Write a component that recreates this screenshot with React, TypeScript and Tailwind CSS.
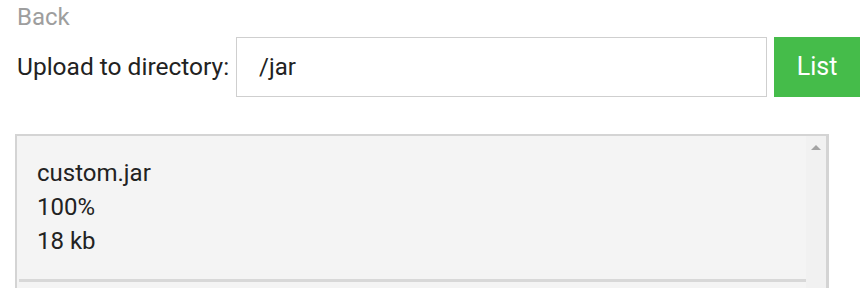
import React from "react";

const font = { fontFamily: "Roboto, 'Noto Sans', sans-serif" };

function UploadItem({ name, progress, size }: { name: string; progress: string; size: string }) {
  return (
    <div className="ml-[2px] border-b-[3px] border-[#d8d8d8] pl-[18px] pt-[20px] pb-[21px] leading-[34px] text-[24px] text-[#222]">
      <div>{name}</div>
      <div>{progress}</div>
      <div>{size}</div>
    </div>
  );
}

export default function App() {
  return (
    <div className="h-[288px] w-[865px] overflow-hidden bg-white pl-[17px]" style={font}>
      <div className="h-[34px] text-[24px] leading-[34px] text-[#9e9e9e]">Back</div>

      <div className="mt-[3px] flex items-center">
        <span className="text-[24.5px] leading-[34px] text-[#222]">Upload to directory:</span>
        <input
          className="ml-[7px] h-[60px] w-[531px] border border-[#cfcfcf] bg-white pl-[22px] text-[24px] text-[#222] outline-none"
          style={font}
          defaultValue="/jar"
        />
        <button className="ml-[7px] h-[60px] w-[86px] bg-[#45bc4a] text-[25px] text-white" style={font}>
          List
        </button>
      </div>

      <div className="-ml-[2px] mt-[37px] flex h-[200px] w-[814px] border-2 border-r-[3px] border-[#d4d4d4] bg-[#f4f4f4]">
        <div className="flex-1">
          <UploadItem name="custom.jar" progress="100%" size="18 kb" />
        </div>
        <div className="flex w-[20px] justify-center bg-[#f1f1f1] pt-[9px]">
          <div className="h-0 w-0 border-x-[5px] border-b-[5px] border-x-transparent border-b-[#a3a3a3]" />
        </div>
      </div>
    </div>
  );
}
